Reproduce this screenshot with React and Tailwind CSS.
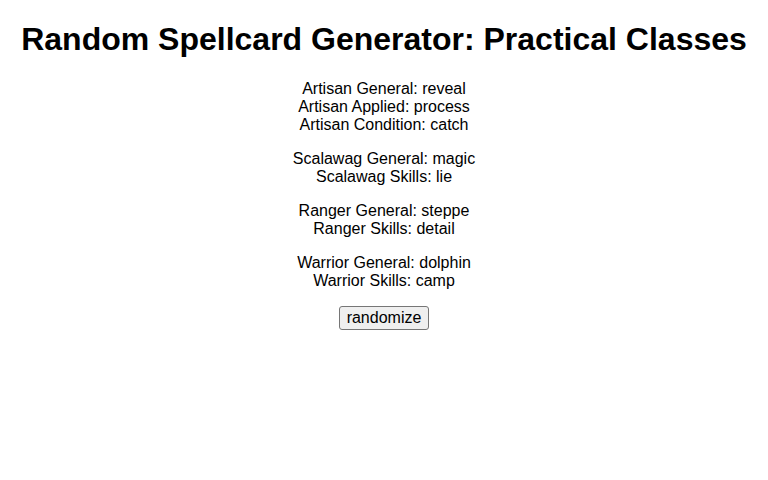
const GROUPS = [
    ['Artisan General: reveal', 'Artisan Applied: process', 'Artisan Condition: catch'],
    ['Scalawag General: magic', 'Scalawag Skills: lie'],
    ['Ranger General: steppe', 'Ranger Skills: detail'],
    ['Warrior General: dolphin', 'Warrior Skills: camp'],
];

export default function App() {
    return (
        <div className="min-h-screen bg-white px-2 text-center text-black font-['Liberation_Sans',Arial,sans-serif] text-base leading-[18px]">
            <h1 className="pt-[21px] pb-[22px] text-[32px] leading-[37px] font-bold">
                Random Spellcard Generator: Practical Classes
            </h1>
            <div className="flex flex-col gap-4">
                {GROUPS.map((lines, i) => (
                    <p key={i}>
                        {lines.map((l, j) => (
                            <span key={j} className="block">{l}</span>
                        ))}
                    </p>
                ))}
            </div>
            <div className="pt-4">
                <button
                    type="button"
                    className="h-[24px] bg-[#efefef] border border-[#767676] rounded-[3px] px-[7px] text-base leading-[18px] text-black"
                >
                    randomize
                </button>
            </div>
        </div>
    );
}
